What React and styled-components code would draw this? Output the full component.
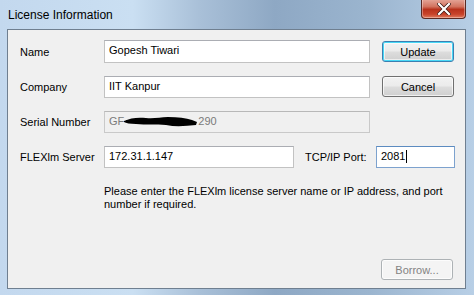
import React from "react";
import styled, { createGlobalStyle } from "styled-components";

const Global = createGlobalStyle`
  html, body { margin: 0; padding: 0; }
  body { width: 474px; height: 295px; overflow: hidden; font-family: "Liberation Sans", Arial, sans-serif; }
`;

const Frame = styled.div`
  width: 474px;
  height: 295px;
  box-sizing: border-box;
  display: flex;
  flex-direction: column;
  padding: 0 8px 6px 7px;
  background:
    linear-gradient(90deg, #c3d8ee 0%, #cadff2 28%, #a9c0d8 42%, #8ea8c4 58%, #9bb5cf 78%, #b8cfe6 100%);
  position: relative;
`;

const TitleBar = styled.div`
  height: 29px;
  display: flex;
  align-items: center;
  justify-content: space-between;
  margin-left: 1px;
  flex: none;
`;

const Title = styled.span`
  font-size: 12px;
  color: #000;
  margin-top: 1px;
`;

const CloseButton = styled.div`
  position: absolute;
  top: -1px;
  right: 8px;
  width: 45px;
  height: 20px;
  box-sizing: border-box;
  border: 1px solid #5a2a24;
  border-top: none;
  border-radius: 0 0 4px 4px;
  background: linear-gradient(180deg, #e6a99c 0%, #d2735f 40%, #b8321c 55%, #c8432a 80%, #e07a5e 100%);
  box-shadow: inset 0 0 0 1px rgba(255,255,255,0.35);
  display: flex;
  align-items: center;
  justify-content: center;
`;

const Client = styled.div`
  flex: 1;
  background: #f0f0f0;
  border: 1px solid #6f7f90;
  box-sizing: border-box;
  padding: 10px 12px 0 12px;
  display: flex;
  flex-direction: column;
`;

const Row = styled.div`
  display: flex;
  align-items: center;
  height: 23px;
  margin-bottom: ${(p) => p.$gap ?? 12}px;
`;

const Label = styled.div`
  width: 84px;
  font-size: 11px;
  color: #000;
  flex: none;
`;

const Input = styled.div`
  width: ${(p) => p.$w}px;
  height: ${(p) => p.$h ?? 22}px;
  box-sizing: border-box;
  border: 1px solid ${(p) => (p.$focus ? "#7da2ce" : p.$disabled ? "#c9c9c9" : "#c2c2c2")};
  border-top-color: ${(p) => (p.$focus ? "#5c8bc0" : p.$disabled ? "#b8b8b8" : "#abadb3")};
  background: ${(p) => (p.$disabled ? "#f0f0f0" : "#fff")};
  color: ${(p) => (p.$disabled ? "#7a7a7a" : "#000")};
  font-size: 11px;
  padding: 3px 0 0 4px;
  display: flex;
  align-items: flex-start;
  flex: none;
  white-space: nowrap;
`;

const Button = styled.div`
  width: 72px;
  height: 21px;
  box-sizing: border-box;
  border-radius: 3px;
  border: 1px solid ${(p) => (p.$default ? "#3c7fb1" : p.$disabled ? "#adb2b5" : "#707070")};
  background: ${(p) =>
    p.$disabled
      ? "#f4f4f4"
      : "linear-gradient(180deg, #f2f2f2 0%, #ebebeb 48%, #dddddd 52%, #cfcfcf 100%)"};
  box-shadow: ${(p) =>
    p.$default
      ? "inset 0 0 0 1px #48d8f6, inset 0 0 0 2px rgba(255,255,255,0.6)"
      : "inset 0 0 0 1px rgba(255,255,255,0.7)"};
  color: ${(p) => (p.$disabled ? "#838383" : "#000")};
  font-size: 11px;
  display: flex;
  align-items: center;
  justify-content: center;
  flex: none;
  margin-left: ${(p) => p.$ml ?? 0}px;
`;

const PortLabel = styled.div`
  font-size: 11px;
  margin-left: 11px;
  width: 71px;
  flex: none;
`;

const Help = styled.div`
  margin-left: 84px;
  margin-top: 17px;
  font-size: 11px;
  line-height: 13px;
  color: #000;
  width: 340px;
`;

const Footer = styled.div`
  margin-top: auto;
  margin-bottom: 8px;
  display: flex;
  justify-content: flex-end;
`;

const Caret = styled.span`
  display: inline-block;
  width: 1px;
  height: 13px;
  background: #000;
  margin-left: 1px;
`;

const Scribble = () => (
  <svg width="74" height="12" viewBox="0 0 74 12">
    <path
      d="M0 6 C6 3, 14 2, 22 3 C30 4, 36 2, 44 2 C54 2, 62 3, 68 5 L73 7 L72 10 C62 11, 52 12, 42 10 C32 9, 22 10, 12 9 C6 9, 2 8, 0 7 Z"
      fill="#000"
    />
    <path d="M2 6 L20 5 L40 6 L60 5" stroke="#000" strokeWidth="1.5" />
  </svg>
);

export default function App() {
  return (
    <>
      <Global />
      <Frame>
        <TitleBar>
          <Title>License Information</Title>
        </TitleBar>
        <CloseButton>
          <svg width="14" height="12" viewBox="0 0 14 12">
            <path d="M2 1 L12 11 M12 1 L2 11" stroke="#3a1510" strokeWidth="3.6" strokeLinecap="square" />
            <path d="M2 1 L12 11 M12 1 L2 11" stroke="#fff" strokeWidth="2.2" strokeLinecap="square" />
          </svg>
        </CloseButton>
        <Client>
          <Row>
            <Label>Name</Label>
            <Input $w={266} $h={23}>Gopesh Tiwari</Input>
            <Button $default $ml={12}>Update</Button>
          </Row>
          <Row>
            <Label>Company</Label>
            <Input $w={266}>IIT Kanpur</Input>
            <Button $ml={12}>Cancel</Button>
          </Row>
          <Row>
            <Label>Serial Number</Label>
            <Input $w={266} $disabled>
              GF<Scribble />290
            </Input>
          </Row>
          <Row $gap={0}>
            <Label>FLEXlm Server</Label>
            <Input $w={190}>172.31.1.147</Input>
            <PortLabel>TCP/IP Port:</PortLabel>
            <Input $w={79} $focus>
              2081<Caret />
            </Input>
          </Row>
          <Help>
            Please enter the FLEXlm license server name or IP address, and port
            <br />
            number if required.
          </Help>
          <Footer>
            <Button $disabled>Borrow...</Button>
          </Footer>
        </Client>
      </Frame>
    </>
  );
}
